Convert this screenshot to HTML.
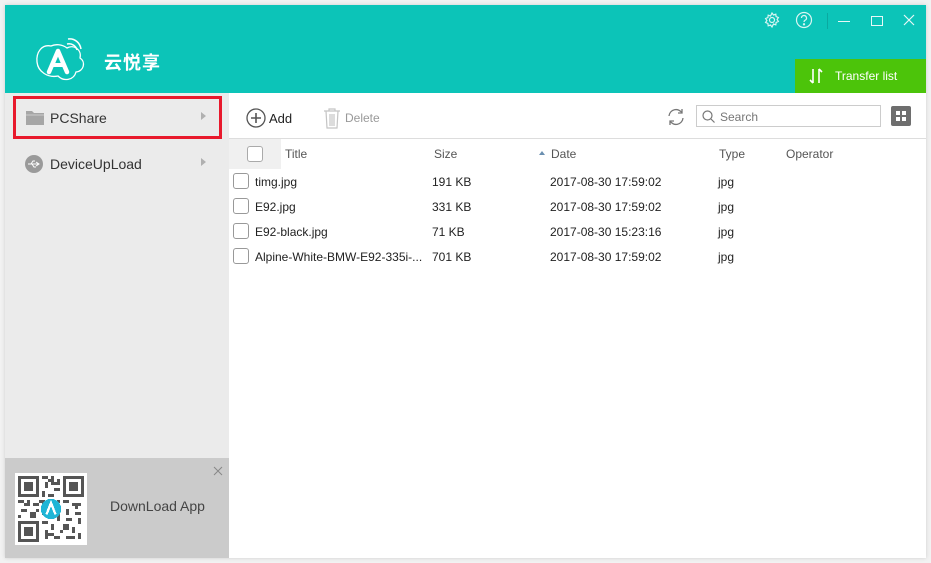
<!DOCTYPE html>
<html><head><meta charset="utf-8">
<style>
*{margin:0;padding:0;box-sizing:border-box}
body{width:931px;height:563px;background:#f2f2f2;font-family:"Liberation Sans","Noto Sans CJK SC",sans-serif;font-size:12px;color:#222;position:relative;overflow:hidden}
.win{position:absolute;left:5px;top:5px;width:921px;height:553px;background:#fff;box-shadow:0 0 4px rgba(0,0,0,.15)}
.hdr{position:absolute;left:0;top:0;width:921px;height:88px;background:#0cc4b8}
.title{position:absolute;left:99px;top:44px;color:#fff;font-size:18px;font-weight:bold;letter-spacing:1px}
.tl{position:absolute;left:790px;top:54px;width:131px;height:34px;background:#4cc40a;color:#fff;font-size:12px}
.side{position:absolute;left:0;top:88px;width:224px;height:465px;background:#ebebeb}
.item{position:absolute;left:0;width:224px;height:42px;font-size:14px;color:#333}
.qr{position:absolute;left:0;top:365px;width:224px;height:100px;background:#cbcbcb}
.abs{position:absolute}
.cb{position:absolute;width:16px;height:16px;border:1px solid #999;border-radius:3px;background:#fff}
.row{position:absolute;left:224px;width:697px;height:25px}
.row span{position:absolute;top:6px}
</style></head><body>
<div class="win">
 <div class="hdr">
  <svg class="abs" style="left:29px;top:33px" width="52" height="48" viewBox="0 0 52 48" fill="none" stroke="#fff">
   <path d="M17 8 C8 6 2 14 3 24 C4 34 14 40 24 38 C30 44 40 42 42 34 C50 33 52 24 46 20 C48 12 40 6 33 10 C28 6 21 6 17 8Z" stroke-width="1.3"/>
   <path d="M15 34 L24 13 L33 34" stroke-width="4.5" stroke-linecap="round" stroke-linejoin="round"/>
   <path d="M18 27 H30" stroke-width="4"/>
   <path d="M33 6 C38 5 42 8 43 12" stroke-width="1.5"/>
   <path d="M34 1 C41 0 46 5 47 11" stroke-width="1.5"/>
  </svg>
  <div class="title">云悦享</div>
  <svg class="abs" style="left:758px;top:6px" width="18" height="18" viewBox="0 0 18 18" fill="none" stroke="#d8f5f2" stroke-width="1.2"><circle cx="9" cy="9" r="2.5"/><path d="M9 2l1.5 2 2.3-.8.3 2.4 2.3.9-1.3 2 1.3 2-2.3.9-.3 2.4-2.3-.8L9 16l-1.5-2-2.3.8-.3-2.4-2.3-.9 1.3-2-1.3-2 2.3-.9.3-2.4 2.3.8z"/></svg>
  <svg class="abs" style="left:790px;top:6px" width="18" height="18" viewBox="0 0 18 18" fill="none" stroke="#d8f5f2" stroke-width="1.2"><circle cx="9" cy="9" r="7.5"/><path d="M6.5 7a2.5 2.5 0 1 1 3.5 2.3c-.8.4-1 .9-1 1.7"/><circle cx="9" cy="13.3" r=".6" fill="#d8f5f2"/></svg>
  <div class="abs" style="left:822px;top:8px;width:1px;height:16px;background:#0aa9a0"></div>
  <div class="abs" style="left:833px;top:16px;width:12px;height:1px;background:#e8f8f7"></div>
  <div class="abs" style="left:866px;top:11px;width:12px;height:10px;border:1px solid #e8f8f7"></div>
  <svg class="abs" style="left:898px;top:9px" width="12" height="12" viewBox="0 0 12 12" stroke="#e8f8f7" stroke-width="1.2"><path d="M1 1L11 11M11 1L1 11"/></svg>
  <div class="tl">
   <svg class="abs" style="left:14px;top:9px" width="14" height="16" viewBox="0 0 14 16" fill="none" stroke="#fff" stroke-width="1.6"><path d="M4 1V15M1 12L4 15M10 15V1M10 1L13 4"/></svg>
   <span class="abs" style="left:40px;top:10px">Transfer list</span>
  </div>
 </div>
 <div class="side">
  <div class="item" style="top:3px;left:8px;width:209px;height:43px;border:3px solid #e8192c"></div>
  <svg class="abs" style="left:21px;top:17px" width="18" height="15" viewBox="0 0 18 15"><path d="M0 1h6l2 2h10v12H0z" fill="#a6a6a6"/><path d="M0 5h18" stroke="#ccc" stroke-width="1"/></svg>
  <span class="abs" style="left:45px;top:17px;font-size:14px;color:#333">PCShare</span>
  <div class="abs" style="left:196px;top:19px;border-left:5px solid #b0b0b0;border-top:4px solid transparent;border-bottom:4px solid transparent"></div>
  <svg class="abs" style="left:20px;top:62px" width="18" height="18" viewBox="0 0 18 18"><circle cx="9" cy="9" r="9" fill="#9a9a9a"/><path d="M3 9h11M11 7l3 2-3 2M6 9l2-3h2M7 9l2 3h2" stroke="#fff" stroke-width="1" fill="none"/></svg>
  <span class="abs" style="left:45px;top:63px;font-size:14px;color:#333">DeviceUpLoad</span>
  <div class="abs" style="left:196px;top:65px;border-left:5px solid #b0b0b0;border-top:4px solid transparent;border-bottom:4px solid transparent"></div>
  <div class="qr">
   <svg class="abs" style="left:10px;top:15px" width="72" height="72" viewBox="0 0 24 24" shape-rendering="crispEdges">
    <rect width="24" height="24" fill="#fff"/>
    <g fill="#555">
     <path d="M1 1h7v7H1zM16 1h7v7h-7zM1 16h7v7H1z"/>
    </g>
    <g fill="#fff"><path d="M2 2h5v5H2zM17 2h5v5h-5zM2 17h5v5H2z"/></g>
    <g fill="#555"><path d="M3 3h3v3H3zM18 3h3v3h-3zM3 18h3v3H3z"/>
     <path d="M9 1h2v1H9zM12 1h1v3h-1zM10 3h1v2h-1zM13 5h2v1h-2zM9 6h1v2H9zM11 7h2v1h-2zM14 2h1v2h-1zM1 9h2v1H1zM4 9h1v2H4zM6 10h2v1H6zM2 12h2v1H2zM1 14h1v1H1zM5 13h2v2H5zM16 9h2v1h-2zM19 10h3v1h-3zM17 12h1v2h-1zM20 13h2v1h-2zM21 15h1v2h-1zM9 16h2v1H9zM12 17h1v2h-1zM10 19h1v3h-1zM13 21h2v1h-2zM16 17h2v2h-2zM19 18h1v2h-1zM17 21h3v1h-3zM21 20h1v2h-1zM14 15h1v1h-1zM15 19h1v1h-1zM9 9h1v2H9zM14 9h1v1h-1zM9 13h1v1H9zM14 13h1v2h-1zM11 2h1v1h-1zM13 3h1v1h-1zM3 10h1v1H3zM7 12h1v1H7zM17 15h2v1h-2zM20 11h1v1h-1zM11 20h2v1h-2zM8 9h1v1H8z"/>
    </g>
    <circle cx="12" cy="12" r="3.4" fill="#1fb5d6"/>
    <path d="M10.5 13.8L12 10l1.5 3.8" stroke="#fff" stroke-width=".8" fill="none"/>
   </svg>
   <span class="abs" style="left:105px;top:40px;font-size:14px;color:#444">DownLoad App</span>
   <svg class="abs" style="left:208px;top:8px" width="10" height="10" viewBox="0 0 10 10" stroke="#888" stroke-width="1"><path d="M1 1L9 9M9 1L1 9"/></svg>
  </div>
 </div>
 <!-- toolbar -->
 <svg class="abs" style="left:241px;top:103px" width="20" height="20" viewBox="0 0 20 20" fill="none" stroke="#555" stroke-width="1.3"><circle cx="10" cy="10" r="9"/><path d="M10 5v10M5 10h10" stroke-width="1.6"/></svg>
 <span class="abs" style="left:264px;top:106px;font-size:13px;color:#222">Add</span>
 <svg class="abs" style="left:318px;top:102px" width="18" height="22" viewBox="0 0 18 22" fill="none" stroke="#c4c4c4" stroke-width="1.2"><path d="M1 4h16M6 4V2h6v2M3 4l1 17h10l1-17M7 7v12M9 7v12M11 7v12"/></svg>
 <span class="abs" style="left:340px;top:106px;font-size:12px;color:#999">Delete</span>
 <svg class="abs" style="left:661px;top:102px" width="20" height="20" viewBox="0 0 20 20" fill="none" stroke="#777" stroke-width="1.3"><path d="M3 9a7 7 0 0 1 13-3M17 11a7 7 0 0 1-13 3"/><path d="M16 2v4h-4M4 18v-4h4"/></svg>
 <div class="abs" style="left:691px;top:100px;width:185px;height:22px;border:1px solid #ccc"></div>
 <svg class="abs" style="left:697px;top:105px" width="13" height="13" viewBox="0 0 13 13" fill="none" stroke="#777" stroke-width="1.2"><circle cx="5.5" cy="5.5" r="4.5"/><path d="M9 9l3.5 3.5"/></svg>
 <span class="abs" style="left:715px;top:105px;font-size:12px;color:#777">Search</span>
 <div class="abs" style="left:886px;top:101px;width:20px;height:20px;background:#6e6e6e;border-radius:2px"></div>
 <div class="abs" style="left:891px;top:106px;width:4px;height:4px;background:#fff"></div>
 <div class="abs" style="left:897px;top:106px;width:4px;height:4px;background:#fff"></div>
 <div class="abs" style="left:891px;top:112px;width:4px;height:4px;background:#fff"></div>
 <div class="abs" style="left:897px;top:112px;width:4px;height:4px;background:#fff"></div>
 <div class="abs" style="left:224px;top:133px;width:697px;height:1px;background:#ddd"></div>
 <!-- header row -->
 <div class="abs" style="left:224px;top:134px;width:52px;height:30px;background:#f0f0f0"></div>
 <div class="cb" style="left:242px;top:141px;border-color:#aaa"></div>
 <span class="abs" style="left:280px;top:142px;color:#555">Title</span>
 <span class="abs" style="left:429px;top:142px;color:#555">Size</span>
 <div class="abs" style="left:534px;top:146px;border-bottom:4px solid #6a8fb0;border-left:3px solid transparent;border-right:3px solid transparent"></div>
 <span class="abs" style="left:546px;top:142px;color:#555">Date</span>
 <span class="abs" style="left:714px;top:142px;color:#555">Type</span>
 <span class="abs" style="left:781px;top:142px;color:#555">Operator</span>
 <!-- rows -->
 <div class="row" style="top:164px"><div class="cb" style="left:4px;top:4px"></div><span style="left:26px">timg.jpg</span><span style="left:203px">191 KB</span><span style="left:321px">2017-08-30 17:59:02</span><span style="left:489px">jpg</span></div>
 <div class="row" style="top:189px"><div class="cb" style="left:4px;top:4px"></div><span style="left:26px">E92.jpg</span><span style="left:203px">331 KB</span><span style="left:321px">2017-08-30 17:59:02</span><span style="left:489px">jpg</span></div>
 <div class="row" style="top:214px"><div class="cb" style="left:4px;top:4px"></div><span style="left:26px">E92-black.jpg</span><span style="left:203px">71 KB</span><span style="left:321px">2017-08-30 15:23:16</span><span style="left:489px">jpg</span></div>
 <div class="row" style="top:239px"><div class="cb" style="left:4px;top:4px"></div><span style="left:26px">Alpine-White-BMW-E92-335i-...</span><span style="left:203px">701 KB</span><span style="left:321px">2017-08-30 17:59:02</span><span style="left:489px">jpg</span></div>
</div>
</body></html>
